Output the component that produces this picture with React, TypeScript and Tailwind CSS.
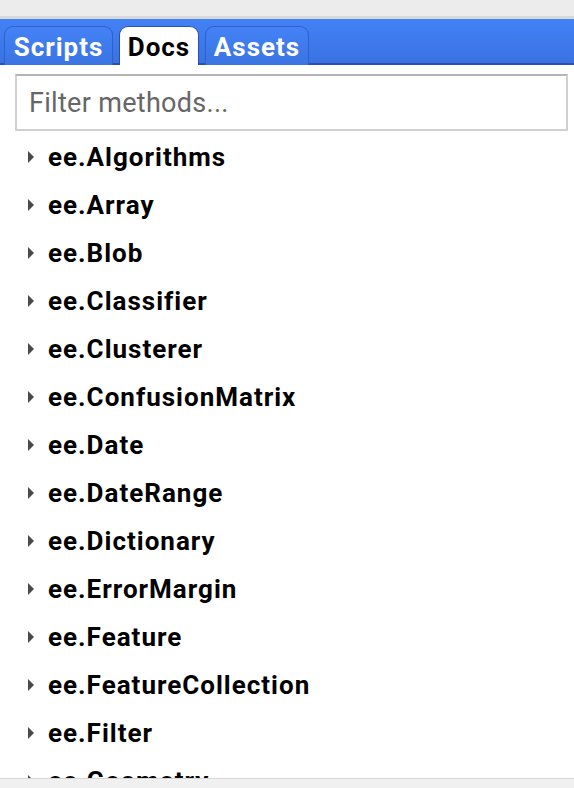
import React from "react";

const items = [
  "ee.Algorithms",
  "ee.Array",
  "ee.Blob",
  "ee.Classifier",
  "ee.Clusterer",
  "ee.ConfusionMatrix",
  "ee.Date",
  "ee.DateRange",
  "ee.Dictionary",
  "ee.ErrorMargin",
  "ee.Feature",
  "ee.FeatureCollection",
  "ee.Filter",
  "ee.Geometry",
];

export default function App() {
  return (
    <div
      className="w-[574px] h-[788px] overflow-hidden bg-white flex flex-col relative"
      style={{ fontFamily: "Roboto, 'Liberation Sans', sans-serif" }}
    >
      <div className="h-[16px] bg-[#ececec] shrink-0" />
      <div className="h-[3px] bg-[#d8d8d8] shrink-0" />
      <div className="h-[46px] shrink-0 bg-gradient-to-b from-[#4281f6] to-[#3a73e2] border-b-2 border-[#2b4eb3] flex items-end pl-[4px] gap-[6px]">
        <div className="h-[39px] w-[109px] -mb-[2px] rounded-t-[9px] border border-b-0 border-[#2f5fcf] bg-gradient-to-b from-[#4382f6] to-[#3b74e2] flex items-center justify-center text-white font-bold text-[26px] tracking-[1px] leading-none pt-[2px]">
          Scripts
        </div>
        <div className="h-[39px] w-[80px] -mb-[2px] rounded-t-[9px] border border-b-0 border-[#2b4eb3] bg-white flex items-center justify-center text-black font-bold text-[26px] tracking-[1px] leading-none pt-[2px] relative z-10">
          Docs
        </div>
        <div className="h-[39px] w-[104px] -mb-[2px] rounded-t-[9px] border border-b-0 border-[#2f5fcf] bg-gradient-to-b from-[#4382f6] to-[#3b74e2] flex items-center justify-center text-white font-bold text-[26px] tracking-[1px] leading-none pt-[2px]">
          Assets
        </div>
      </div>
      <div className="pl-[15px] pr-[6px] pt-[9px] shrink-0">
        <div className="h-[57px] border-2 border-[#d0d0d0] border-t-[#b4b4b4] flex items-center pl-[12px]">
          <span className="text-[27px] tracking-[0.3px] text-[#666666] leading-none pt-[1px]">Filter methods...</span>
        </div>
      </div>
      <div className="flex flex-col pt-[2px] flex-1 overflow-hidden">
        {items.map((it) => (
          <div key={it} className="h-[48px] shrink-0 flex items-center pl-[28px]">
            <svg width="6" height="12" viewBox="0 0 6 12" className="mr-[14px] shrink-0">
              <polygon points="0,0 6,6 0,12" fill="#4a4a4a" />
            </svg>
            <span className="text-[26px] tracking-[1px] font-bold text-black leading-none">{it}</span>
          </div>
        ))}
      </div>
      <div className="absolute left-0 right-0 bottom-0 h-[10px] bg-[#f0f0f0] border-t border-[#d6d6d6]" />
    </div>
  );
}
